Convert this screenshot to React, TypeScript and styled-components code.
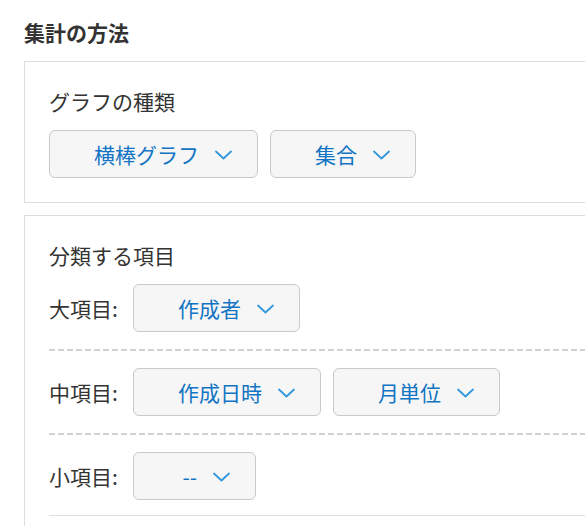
import styled, { createGlobalStyle } from 'styled-components';

const GlobalStyle = createGlobalStyle`
  html, body {
    margin: 0;
    padding: 0;
    overflow: hidden;
    background: #fff;
  }
  body {
    font-family: 'Noto Sans CJK JP', 'Noto Sans', sans-serif;
    color: #333;
  }
`;

type Option = { label: string; width: number };

const Chevron = () => (
  <svg width='17' height='10' viewBox='0 0 17 10' fill='none'>
    <polyline
      points='1,1.5 8.5,8.5 16,1.5'
      stroke='#3497dc'
      strokeWidth='1.8'
      strokeLinecap='round'
      strokeLinejoin='round'
    />
  </svg>
);

const Select = ({ option }: { option: Option }) => (
  <SelectButton $width={option.width}>
    <span>{option.label}</span>
    <Chevron />
  </SelectButton>
);

const rows: { label: string; options: Option[] }[] = [
  { label: '大項目:', options: [{ label: '作成者', width: 167 }] },
  {
    label: '中項目:',
    options: [
      { label: '作成日時', width: 188 },
      { label: '月単位', width: 167 },
    ],
  },
  { label: '小項目:', options: [{ label: '--', width: 123 }] },
];

const App = () => {
  return (
    <Page>
      <GlobalStyle />
      <Heading>集計の方法</Heading>
      <Panel>
        <PanelLabel>グラフの種類</PanelLabel>
        <SelectGroup>
          <Select option={{ label: '横棒グラフ', width: 209 }} />
          <Select option={{ label: '集合', width: 146 }} />
        </SelectGroup>
      </Panel>
      <Panel $gap>
        <PanelLabel>分類する項目</PanelLabel>
        {rows.map((row, i) => (
          <Row key={row.label} $first={i === 0} $last={i === rows.length - 1}>
            <RowLabel>{row.label}</RowLabel>
            <SelectGroup>
              {row.options.map((o) => (
                <Select key={o.label} option={o} />
              ))}
            </SelectGroup>
          </Row>
        ))}
      </Panel>
    </Page>
  );
};

const Page = styled.div`
  padding: 17px 0 0 24px;
  width: 620px;
`;

const Heading = styled.h2`
  margin: 0 0 14px;
  font-size: 21px;
  line-height: 30px;
  font-weight: 700;
  color: #333;
`;

const Panel = styled.section<{ $gap?: boolean }>`
  border: 1px solid #dedede;
  padding: 24px 0 24px 24px;
  margin-top: ${(p) => (p.$gap ? '12px' : '0')};
`;

const PanelLabel = styled.div`
  font-size: 21px;
  line-height: 30px;
  color: #333;
  margin-bottom: 14px;
`;

const SelectGroup = styled.div`
  display: flex;
  gap: 12px;
`;

const SelectButton = styled.button<{ $width: number }>`
  box-sizing: border-box;
  width: ${(p) => p.$width}px;
  height: 48px;
  display: inline-flex;
  align-items: center;
  justify-content: flex-end;
  gap: 16px;
  padding: 0 25px 0 0;
  border: 1px solid #c9c9c9;
  border-radius: 6px;
  background: #f6f6f6;
  font-family: inherit;
  font-size: 21px;
  color: #1274c4;
  cursor: pointer;
  svg {
    margin-top: 2px;
  }
`;

const Row = styled.div<{ $first?: boolean; $last?: boolean }>`
  display: flex;
  align-items: center;
  padding-top: ${(p) => (p.$first ? '0' : '17px')};
  padding-bottom: ${(p) => (p.$last ? '15px' : '19px')};
  border-bottom: ${(p) => (p.$last ? '1px solid #dedede' : 'none')};
  background-image: ${(p) =>
    p.$last
      ? 'none'
      : 'repeating-linear-gradient(to right, #d2d2d2 0 6px, transparent 6px 9px)'};
  background-size: 100% 2px;
  background-position: bottom left;
  background-repeat: no-repeat;
`;

const RowLabel = styled.div`
  width: 84px;
  font-size: 21px;
  line-height: 30px;
  color: #333;
`;

export default App;
